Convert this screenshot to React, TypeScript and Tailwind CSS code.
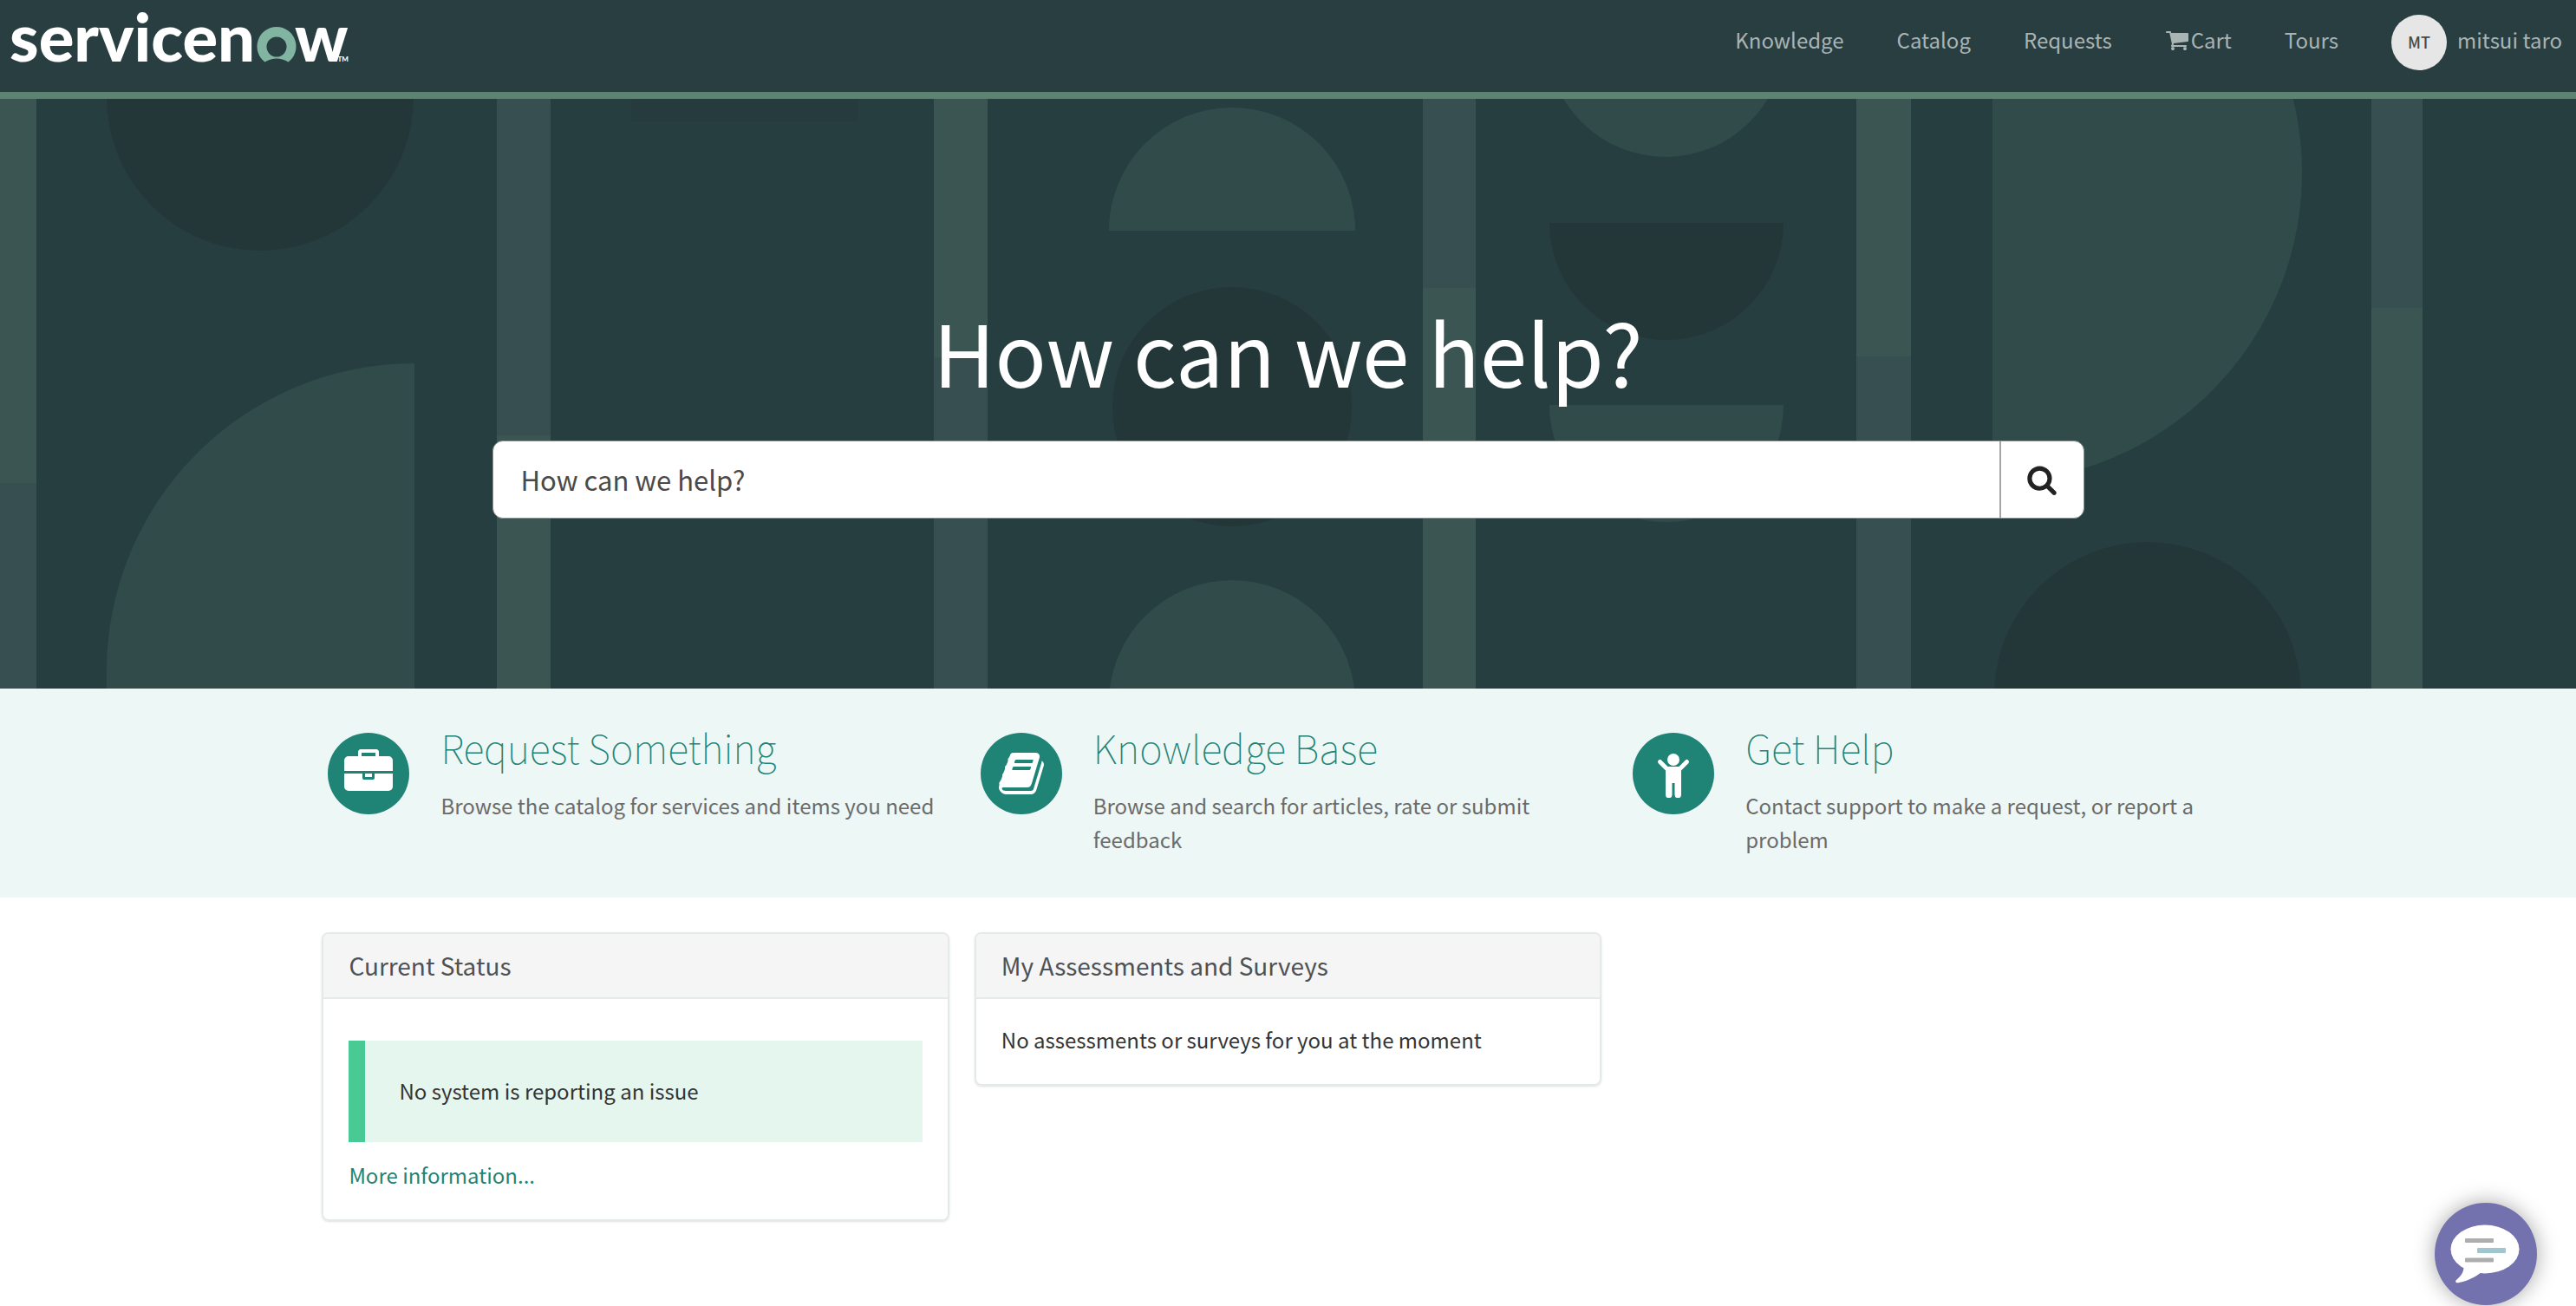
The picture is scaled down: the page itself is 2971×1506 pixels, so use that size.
import type { ReactNode } from "react"

const navLinks = ["Knowledge", "Catalog", "Requests"]

function Logo() {
  return (
    <svg viewBox="0 0 400 76" className="h-[76px] w-[400px]" role="img" aria-label="servicenow">
      <g fill="#ffffff" fontFamily="Lato, sans-serif" fontWeight="900" fontSize="76">
        <text x="-1" y="71">
          servicen
        </text>
        <text x="328" y="71">
          w
          <tspan dx="-12" fontSize="8">
            TM
          </tspan>
        </text>
      </g>
      <path
        fill="#81b5a1"
        fillRule="evenodd"
        d="M307 31a22.500 22.500 0 0 0-13.500 40.500q13.500-8 27 0A22.500 22.500 0 0 0 307 31zm0 11.500a11.500 11.500 0 1 1 0 23 11.500 11.500 0 0 1 0-23z"
      />
    </svg>
  )
}

function CartIcon() {
  return (
    <svg viewBox="0 0 1792 1792" fill="currentColor" className="h-7 w-7" aria-hidden="true">
      <path d="M704 1536q0 52-38 90t-90 38-90-38-38-90 38-90 90-38 90 38 38 90zm896 0q0 52-38 90t-90 38-90-38-38-90 38-90 90-38 90 38 38 90zm128-1088v512q0 24-16.500 42.500t-40.500 21.500l-1044 122q13 60 13 70 0 16-24 64h920q26 0 45 19t19 45-19 45-45 19h-1024q-26 0-45-19t-19-45q0-11 8-31.500t16-36 21.500-40 15.500-29.500l-177-823h-204q-26 0-45-19t-19-45 19-45 45-19h256q16 0 28.500 6.500t19.500 15.500 13 24.500 8 26 5.500 29.500 4.500 26h1201q26 0 45 19t19 45z" />
    </svg>
  )
}

function SearchIcon() {
  return (
    <svg viewBox="0 0 1792 1792" fill="currentColor" className="h-9 w-9" aria-hidden="true">
      <path d="M1216 832q0-185-131.500-316.500T768 384 451.500 515.500 320 832t131.500 316.500T768 1280t316.500-131.500T1216 832zm512 832q0 52-38 90t-90 38q-54 0-90-38l-343-342q-179 124-399 124-143 0-273.500-55.500t-225-150-150-225T64 832t55.500-273.500 150-225 225-150T768 128t273.500 55.500 225 150 150 225T1472 832q0 220-124 399l343 343q37 37 37 90z" />
    </svg>
  )
}

function BriefcaseIcon() {
  return (
    <svg viewBox="0 0 1792 1792" fill="currentColor" className="h-14 w-14" aria-hidden="true">
      <path d="M640 128h512v128h-512v-128zm1152 768v480q0 66-47 113t-113 47h-1472q-66 0-113-47t-47-113v-480h672v160q0 26 19 45t45 19h320q26 0 45-19t19-45v-160h672zm-768 0v128h-256v-128h256zm768-480v384h-1792v-384q0-66 47-113t113-47h352v-160q0-40 28-68t68-28h576q40 0 68 28t28 68v160h352q66 0 113 47t47 113z" fillRule="evenodd" />
    </svg>
  )
}

function BookIcon() {
  return (
    <svg viewBox="0 0 1792 1792" fill="currentColor" className="h-14 w-14" aria-hidden="true">
      <path d="M1703 478q40 57 18 129l-275 906q-19 64-76.500 107.500t-122.500 43.500h-923q-77 0-148.500-53.500t-99.500-131.500q-24-67-2-127 0-4 3-27t4-37q1-8-3-21.500t-3-19.500q2-11 8-21t16.500-23.500 16.500-23.500q23-38 45-91.500t30-91.500q3-10 .5-30t-.5-28q3-11 17-28t17-23q21-36 42-92t25-90q1-9-2.500-32t.5-28q4-13 22-30.500t22-22.500q19-26 42.500-84.500t27.500-96.500q1-8-3-25.500t-2-26.500q2-8 9-18t18-23 17-21q8-12 16.500-30.500t15-35 16-36 19.500-32 26.500-23.500 36-11.500 47.500 5.500l-1 3q38-9 51-9h761q74 0 114 56t18 130l-274 906q-36 119-71.500 153.500t-128.500 34.500h-869q-27 0-38 15-11 16-1 43 24 70 144 70h923q29 0 56-15.500t35-41.500l300-987q7-22 5-57 38 15 59 43zm-1064 2q-4 13 2 22.500t20 9.500h608q13 0 25.500-9.500t16.500-22.500l21-64q4-13-2-22.500t-20-9.500h-608q-13 0-25.500 9.500t-16.500 22.500zm-83 256q-4 13 2 22.500t20 9.500h608q13 0 25.500-9.500t16.500-22.500l21-64q4-13-2-22.500t-20-9.500h-608q-13 0-25.500 9.500t-16.500 22.500z" />
    </svg>
  )
}

function ChildIcon() {
  return (
    <svg viewBox="0 0 56 56" fill="currentColor" className="h-14 w-14" aria-hidden="true">
      <circle cx="28" cy="12" r="7" />
      <path d="M12.500 14.500 21 23M43.500 14.500 35 23" stroke="currentColor" strokeWidth="5" strokeLinecap="round" />
      <path d="M19 20h18v32.500a3.500 3.500 0 0 1-7.500 0V39h-3v13.500a3.500 3.500 0 0 1-7.500 0z" />
    </svg>
  )
}

function HeroPattern() {
  return (
    <svg
      viewBox="0 114 2971 680"
      preserveAspectRatio="xMidYMid slice"
      className="absolute inset-0 h-full w-full"
      aria-hidden="true"
    >
      <g fill="#3b5652">
        <path d="M0 114h42v443H0z" />
        <path d="M573 502h62v292h-62z" />
        <path d="M1077 114h62v298h-62z" />
        <path d="M1641 332h61v462h-61z" />
        <path d="M2141 114h63v297h-63z" />
        <path d="M2735 355h59v439h-59z" />
      </g>
      <g fill="#384f51">
        <path d="M0 557h42v237H0z" />
        <path d="M573 114h62v388h-62z" />
        <path d="M1077 412h62v382h-62z" />
        <path d="M1641 114h61v218h-61z" />
        <path d="M2141 411h63v383h-63z" />
        <path d="M2735 114h59v241h-59z" />
      </g>
      <g fill="#314b4b">
        <path d="M123 794v-20a355 355 0 0 1 355-355v375z" />
        <path d="M1279 266a142 142 0 0 1 284 0z" />
        <circle cx="1421" cy="811" r="142" />
        <circle cx="1921" cy="44" r="137" />
        <path d="M1787 467a135 135 0 0 0 270 0z" />
        <path d="M2298 100h343a357 357 0 0 1-343 456z" />
      </g>
      <g fill="#233739">
        <circle cx="300" cy="112" r="177" />
        <path d="M728 114h261v26H728z" fill="#263b3d" />
        <circle cx="1421" cy="469" r="138" />
        <path d="M1787 257a135 135 0 0 0 270 0z" />
        <circle cx="2477" cy="802" r="177" />
      </g>
    </svg>
  )
}

function Feature({ icon, title, text }: { icon: ReactNode; title: string; text: string }) {
  return (
    <a href="#" className="flex items-start pl-[7px]">
      <span className="mt-2 mr-9 flex h-[94px] w-[94px] shrink-0 items-center justify-center rounded-full bg-[#1f8476] text-white">
        {icon}
      </span>
      <span className="block">
        <span className="block text-[45px] leading-[50px] font-thin text-[#1f8476]">{title}</span>
        <span className="mt-[22px] block text-[24px] leading-[39px] text-[#6b6b6b]">{text}</span>
      </span>
    </a>
  )
}

function Card({ title, children }: { title: string; children: ReactNode }) {
  return (
    <section className="overflow-hidden rounded-lg border-2 border-[#e4eaea] shadow-sm">
      <h2 className="border-b-2 border-[#e4eaea] bg-[#f5f5f5] px-[29px] text-[28px] leading-[73px] text-[#4f5254]">
        {title}
      </h2>
      <div className="px-[29px] pt-[27px] pb-8 text-[24px] leading-[39px] text-[#343434]">{children}</div>
    </section>
  )
}

export default function App() {
  return (
    <div className="min-h-screen bg-white font-['Noto_Sans_CJK_JP',sans-serif]">
      <header className="flex h-[114px] items-start justify-between border-b-8 border-[#5d8371] bg-[#293e41] pr-4 pl-3">
        <a href="#">
          <Logo />
        </a>
        <nav className="flex gap-[61px] text-[24px] leading-[92px] text-[#a9b4b5]">
          {navLinks.map((label) => (
            <a key={label} href="#">
              {label}
            </a>
          ))}
          <a href="#" className="flex items-center gap-[2px]">
            <CartIcon />
            Cart
          </a>
          <a href="#">Tours</a>
          <a href="#" className="flex gap-3">
            <span className="mt-[17px] h-16 w-16 rounded-full bg-[#e6e6e6] text-center text-[18px] leading-[62px] font-medium text-[#4a4a4a]">
              MT
            </span>
            mitsui taro
          </a>
        </nav>
      </header>

      <main>
        <div className="relative h-[680px] bg-[#273e40] px-8 pt-[230px]">
          <HeroPattern />
          <div className="relative mx-auto max-w-[1836px]">
            <h1 className="text-center text-[98px] leading-[120px] text-white">How can we help?</h1>
            <form className="mt-11 flex h-[90px] overflow-hidden rounded-xl border border-[#8b9292] bg-white">
              <input
                type="text"
                aria-label="How can we help?"
                placeholder="How can we help?"
                className="min-w-0 flex-1 pl-8 text-[31px] text-[#343434] outline-none placeholder:text-[#4a4a4a]"
              />
              <button
                type="button"
                aria-label="Search"
                className="flex w-[97px] items-center justify-center border-l-2 border-[#a5a5a5] text-[#222222]"
              >
                <SearchIcon />
              </button>
            </form>
          </div>
        </div>

        <div className="bg-[#edf7f6] pt-[43px] pb-12">
          <div className="mx-auto grid w-3/4 grid-cols-3 gap-[29px]">
            <Feature
              icon={<BriefcaseIcon />}
              title="Request Something"
              text="Browse the catalog for services and items you need"
            />
            <Feature
              icon={<BookIcon />}
              title="Knowledge Base"
              text="Browse and search for articles, rate or submit feedback"
            />
            <Feature
              icon={<ChildIcon />}
              title="Get Help"
              text="Contact support to make a request, or report a problem"
            />
          </div>
        </div>

        <div className="mx-auto mt-10 grid w-3/4 grid-cols-3 items-start gap-[29px]">
          <Card title="Current Status">
            <p className="mt-[21px] border-l-[19px] border-[#49c993] bg-[#e5f6ee] pt-[38px] pr-9 pb-10 pl-[39px]">
              No system is reporting an issue
            </p>
            <a href="#" className="mt-[18px] block text-[#1f8476]">
              More information...
            </a>
          </Card>
          <Card title="My Assessments and Surveys">
            <p>No assessments or surveys for you at the moment</p>
          </Card>
        </div>
      </main>

      <button
        type="button"
        aria-label="Open chat"
        className="fixed right-[45px] bottom-px h-[118px] w-[118px] rounded-full bg-[#7472ae] shadow-[0_0_24px_rgba(0,0,0,0.35)]"
      >
        <svg viewBox="0 0 118 118" aria-hidden="true">
          <ellipse cx="58" cy="53.500" rx="39.500" ry="28" fill="#ffffff" />
          <path d="M33 70c2 8-2 14-8 19-2 2 0 4 3 3 10-2 18-6 26-12z" fill="#ffffff" />
          <path d="M36 41h31q1 0 1 1v3q0 1-1 1H36q-1 0-1-1v-3q0-1 1-1zM36 63.500h31q1 0 1 1v3q0 1-1 1H36q-1 0-1-1v-3q0-1 1-1z" fill="#adadad" />
          <path d="M50 52h31q1 0 1 1v4q0 1-1 1H50q-1 0-1-1v-4q0-1 1-1z" fill="#a0c6cf" />
        </svg>
      </button>
    </div>
  )
}
